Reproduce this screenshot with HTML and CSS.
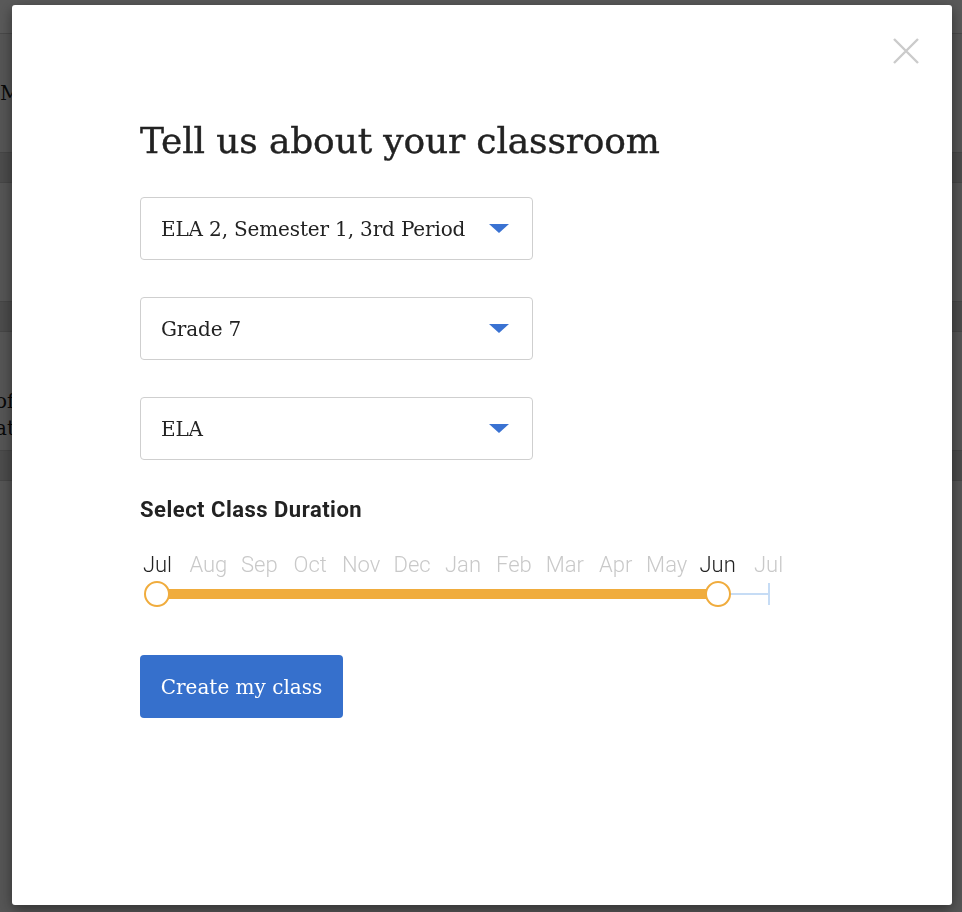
FILE: index.html
```html
<!DOCTYPE html>
<html lang="en">
<head>
  <meta charset="UTF-8" />
  <title>Create a class</title>
  <link rel="stylesheet" href="styles.css">
</head>
<body>
  <!-- page behind the dialog -->
  <div class="page">
    <div class="page-bar"></div>
    <div class="page-row"><span class="page-text">Manage</span></div>
    <div class="page-split"></div>
    <div class="page-row"></div>
    <div class="page-split"></div>
    <div class="page-row page-row--low"><span class="page-text page-text--inset">of the year<br>at a time</span></div>
    <div class="page-split"></div>
    <div class="page-row"></div>
  </div>

  <div class="overlay">
    <div class="modal">
      <button class="modal-close" aria-label="Close">
        <svg width="26" height="26" viewBox="0 0 26 26">
          <path d="M1 1L25 25M25 1L1 25" stroke="#cbcbcb" stroke-width="2.4" fill="none" />
        </svg>
      </button>

      <h1 class="modal-title">Tell us about your classroom</h1>

      <div class="select">
        <span class="select-value">ELA 2, Semester 1, 3rd Period</span>
        <span class="select-caret"></span>
      </div>
      <div class="select">
        <span class="select-value">Grade 7</span>
        <span class="select-caret"></span>
      </div>
      <div class="select">
        <span class="select-value">ELA</span>
        <span class="select-caret"></span>
      </div>

      <h2 class="duration-title">Select Class Duration</h2>
      <div class="duration">
        <div class="months">
          <span class="month on">Jul</span>
          <span class="month">Aug</span>
          <span class="month">Sep</span>
          <span class="month">Oct</span>
          <span class="month">Nov</span>
          <span class="month">Dec</span>
          <span class="month">Jan</span>
          <span class="month">Feb</span>
          <span class="month">Mar</span>
          <span class="month">Apr</span>
          <span class="month">May</span>
          <span class="month on">Jun</span>
          <span class="month">Jul</span>
        </div>
        <div class="track">
          <div class="track-rest"></div>
          <div class="track-fill"></div>
          <span class="handle handle-start"></span>
          <span class="handle handle-end"></span>
        </div>
      </div>

      <button class="btn-create">Create my class</button>
    </div>
  </div>
</body>
</html>
```

FILE: styles.css
```css
html, body {
  margin: 0;
  height: 100%;
}
body {
  font-family: Roboto, "Liberation Sans", sans-serif;
  background: #f4f4f4;
  overflow: hidden;
}

/* page under the dialog */
.page-bar {
  height: 33px;
  background: #fff;
  border-bottom: 1px solid #d0d0d0;
}
.page-row {
  height: 118px;
  background: #f4f4f4;
  display: flex;
  align-items: center;
}
.page-row--low {
  align-items: flex-start;
  padding-top: 56px;
  height: 62px;
}
.page-split {
  height: 29px;
  background: #d8d8d8;
  border-top: 1px solid #c8c8c8;
  border-bottom: 1px solid #c8c8c8;
}
.page-text {
  font-family: "DejaVu Serif", serif;
  font-size: 20px;
  line-height: 27px;
  color: #1a1a1a;
  margin-left: 0;
}
.page-text--inset {
  margin-left: -5px;
}

.overlay {
  position: fixed;
  inset: 0;
  background: rgba(0, 0, 0, 0.65);
  padding: 5px 10px 7px 12px;
  display: flex;
}
.modal {
  position: relative;
  flex: 1;
  background: #fff;
  border-radius: 3px;
  box-shadow: 0 4px 14px rgba(0, 0, 0, 0.45);
  padding: 112px 0 0 128px;
  box-sizing: border-box;
}
.modal-close {
  position: absolute;
  top: 33px;
  right: 33px;
  padding: 0;
  border: 0;
  background: none;
  width: 26px;
  height: 26px;
  cursor: pointer;
}
.modal-close svg {
  display: block;
}

.modal-title {
  margin: 0 0 32px;
  font-family: "DejaVu Serif", serif;
  font-weight: normal;
  font-size: 36px;
  line-height: 48px;
  letter-spacing: -0.15px;
  color: #222;
  -webkit-text-stroke: 0.4px #222;
}

.select {
  width: 393px;
  height: 63px;
  box-sizing: border-box;
  border: 1px solid #cfcfcf;
  border-radius: 4px;
  display: flex;
  align-items: center;
  justify-content: space-between;
  padding: 0 23px 0 20px;
  margin-bottom: 37px;
}
.select-value {
  font-family: "DejaVu Serif", serif;
  font-size: 20px;
  letter-spacing: -0.15px;
  color: #222;
}
.select-caret {
  width: 0;
  height: 0;
  border-left: 10px solid transparent;
  border-right: 10px solid transparent;
  border-top: 9px solid #3a72d2;
}

.duration-title {
  margin: 0 0 29px;
  font-size: 22px;
  font-weight: 700;
  line-height: 26px;
  letter-spacing: 0.5px;
  color: #222;
}
.duration {
  width: 662px;
  margin-left: -8px;
}
.months {
  display: grid;
  grid-template-columns: repeat(13, 1fr);
}
.month {
  text-align: center;
  font-size: 22px;
  font-weight: 300;
  line-height: 26px;
  color: #c9c9c9;
}
.month.on {
  color: #222;
}

/* slider: filled range Jul to Jun, rest Jun to Jul */
.track {
  position: relative;
  height: 26px;
  margin-top: 3px;
}
.track-fill {
  position: absolute;
  left: calc(100% / 26);
  right: calc(100% * 3 / 26);
  top: 8px;
  height: 10px;
  background: #f0ac3d;
}
.track-rest {
  position: absolute;
  left: calc(100% * 23 / 26);
  right: calc(100% / 26 - 1px);
  top: 12px;
  height: 2px;
  background: #c6dcf5;
}
.track-rest::after {
  content: "";
  position: absolute;
  right: 0;
  top: -10px;
  width: 2px;
  height: 22px;
  background: #c6dcf5;
}
.handle {
  position: absolute;
  top: 0;
  width: 26px;
  height: 26px;
  margin-left: -13px;
  box-sizing: border-box;
  border: 2px solid #f0ac3d;
  border-radius: 50%;
  background: #fff;
}
.handle-start {
  left: calc(100% / 26);
}
.handle-end {
  left: calc(100% * 23 / 26);
}

.btn-create {
  margin-top: 48px;
  width: 203px;
  height: 63px;
  border: 0;
  border-radius: 4px;
  background: #3670cc;
  color: #fff;
  font-family: "DejaVu Serif", serif;
  font-size: 20px;
  cursor: pointer;
}
```
